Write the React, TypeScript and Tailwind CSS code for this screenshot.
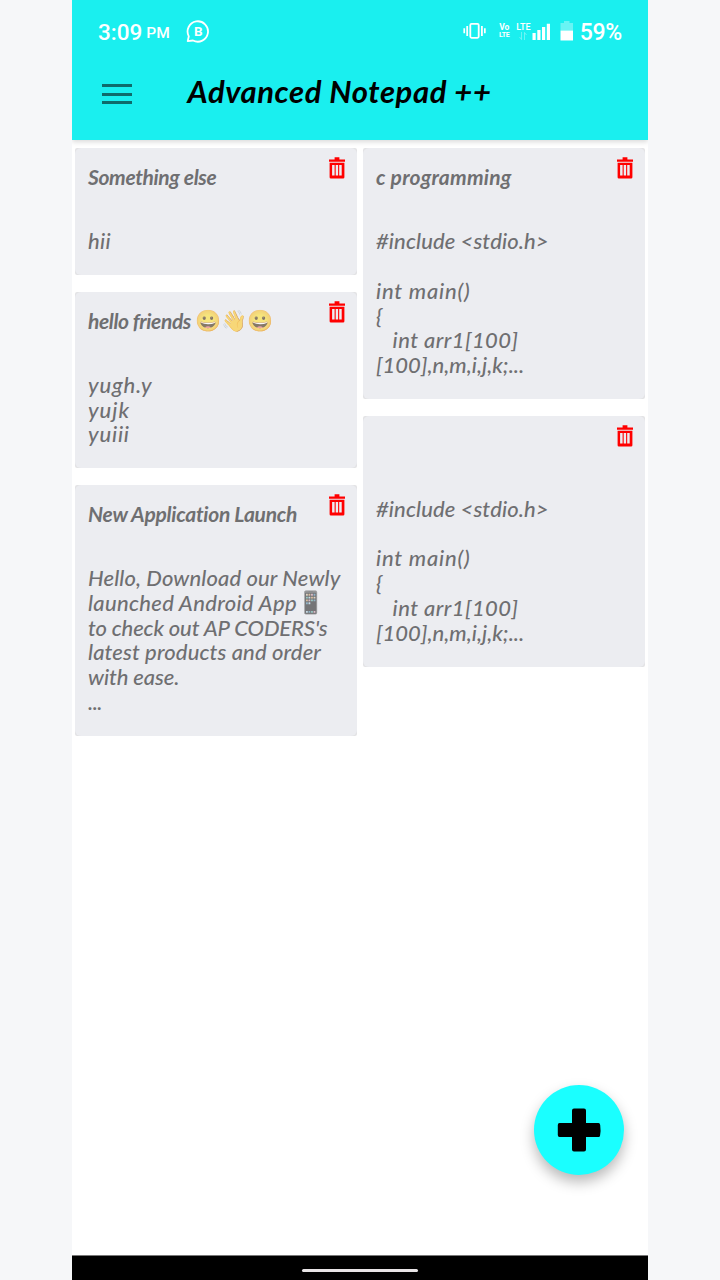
interface Line {
  text: string;
  tracking?: string;
  emoji?: string;
  emojiClass?: string;
}

interface Note {
  title: Line;
  body: Line[];
}

const stdioBody: Line[] = [
  { text: "#include <stdio.h>", tracking: "tracking-[0.1px]" },
  { text: "" },
  { text: "int main()", tracking: "tracking-[0.8px]" },
  { text: "{" },
  { text: "   int arr1[100]", tracking: "tracking-[0.45px]" },
  { text: "[100],n,m,i,j,k;...", tracking: "tracking-[0.05px]" },
];

const leftNotes: Note[] = [
  {
    title: { text: "Something else", tracking: "tracking-[-0.35px]" },
    body: [{ text: "hii", tracking: "tracking-[0.3px]" }],
  },
  {
    title: { text: "hello friends ", tracking: "tracking-[-0.4px]", emoji: "😀👋😀", emojiClass: "opacity-60" },
    body: [
      { text: "yugh.y", tracking: "tracking-[0.8px]" },
      { text: "yujk", tracking: "tracking-[1px]" },
      { text: "yuiii", tracking: "tracking-[0.8px]" },
    ],
  },
  {
    title: { text: "New Application Launch", tracking: "tracking-[-0.27px]" },
    body: [
      { text: "Hello, Download our Newly", tracking: "tracking-[0.12px]" },
      { text: "launched Android App", tracking: "tracking-[0.3px]", emoji: "📱", emojiClass: "opacity-50 grayscale-50" },
      { text: "to check out AP CODERS's", tracking: "tracking-[-0.13px]" },
      { text: "latest products and order", tracking: "tracking-[0.12px]" },
      { text: "with ease.", tracking: "tracking-[-0.1px]" },
      { text: "...", tracking: "tracking-[-0.5px]" },
    ],
  },
];

const rightNotes: Note[] = [
  { title: { text: "c programming", tracking: "tracking-[0.25px]" }, body: stdioBody },
  { title: { text: "" }, body: stdioBody },
];

function TextLine({ line }: { line: Line }) {
  return (
    <p className="flex h-[24.8px] items-center whitespace-pre leading-[24.8px]">
      <span className={line.tracking}>{line.text}</span>
      {line.emoji && (
        <span className={"font-['Noto_Color_Emoji',sans-serif] font-normal not-italic " + line.emojiClass}>{line.emoji}</span>
      )}
    </p>
  );
}

function TrashIcon() {
  return (
    <svg width="18" height="22" viewBox="0 0 18 22" fill="#ff0000">
      <path d="M6.6 0.3h4.8v2.2H17v2.2H1V2.5h5.6z" />
      <path
        fillRule="evenodd"
        d="M1.6 5.7h14.8v14.5a1.3 1.3 0 0 1-1.3 1.3H2.9a1.3 1.3 0 0 1-1.3-1.3zM4.1 8v10.6h2.5V8zM7.7 8v10.6h2.4V8zM11.2 8v10.6h2.5V8z"
      />
    </svg>
  );
}

function NoteCard({ note }: { note: Note }) {
  return (
    <div className="rounded-[2px] bg-[#e3e3e5]">
      <article className="relative rounded-[6px] bg-[#ecedf1] pt-[17px] pr-1 pb-[21px] pl-[13px] font-['Lato',sans-serif] text-[22px] text-[#6f6f71] italic">
        <h2 className="h-[25px] text-[21px] font-bold">
          <TextLine line={note.title} />
        </h2>
        <div className="mt-[39.2px] font-medium">
          {note.body.map((line, i) => (
            <TextLine key={i} line={line} />
          ))}
        </div>
        <button className="absolute top-[9px] right-[11px]" aria-label="Delete note">
          <TrashIcon />
        </button>
      </article>
    </div>
  );
}

function StatusBar() {
  return (
    <div className="flex h-[64px] items-center px-[26px] font-['Roboto',sans-serif] font-medium text-white">
      <span className="text-[22.5px] leading-none">3:09</span>
      <span className="mt-1 ml-[4px] text-[15.5px] leading-none">PM</span>
      <svg className="-mt-[3px] ml-[16px]" width="24" height="24" viewBox="0 0 24 24" fill="none" stroke="#fff" strokeWidth="1.8">
        <path d="M1.7 22.1 2.8 17.3A10.2 10.2 0 1 1 7 21.5z" strokeLinejoin="round" />
        <text x="12.2" y="16.8" textAnchor="middle" fill="#fff" stroke="none" fontFamily="Roboto" fontSize="13.5" fontWeight="700">B</text>
      </svg>
      <svg className="-mt-[2px] ml-auto" width="24" height="18" viewBox="0 0 24 18" fill="#fff">
        <rect x="7.3" y="1.8" width="8.4" height="14" rx="1.2" fill="none" stroke="#fff" strokeWidth="1.8" />
        <path d="M3.3 4h1.8v10H3.3zM0.4 6.3h1.7v5H0.4zM18 4h1.8v10H18zM21 6.3h1.7v5H21z" />
      </svg>
      <span className="-mt-[2px] ml-[12px] flex w-[11px] flex-col items-center font-bold">
        <span className="text-[8.5px] leading-[8px]">Vo</span>
        <span className="text-[7px] leading-[8px] tracking-[-0.3px]">LTE</span>
      </span>
      <span className="-mt-[2px] ml-[6px] flex w-[15px] flex-col items-center">
        <span className="text-[9px] leading-[9px]">LTE</span>
        <svg width="8" height="8" viewBox="0 0 8 8" fill="none" stroke="#fff" strokeOpacity="0.35">
          <path d="M2.5 0v7.5L0.5 5M5.5 8V0.5l2 2.5" />
        </svg>
      </span>
      <svg className="-mt-[2px] ml-px" width="19" height="17" viewBox="0 0 19 17" fill="#fff">
        <path d="M0.5 10h3.2v7H0.5zM5.3 7h3.2v10H5.3zM10 4h3.2v13H10zM14.8 0.8H18V17h-3.2z" />
      </svg>
      <svg className="-mt-[2px] ml-[9px]" width="14" height="20" viewBox="0 0 14 20" fill="#fff">
        <path d="M4 0h5.5v2H13v7.5H0.5V2H4z" fillOpacity="0.35" />
        <path d="M0.5 9.5H13v10H0.5z" />
      </svg>
      <span className="ml-[6px] text-[23px] leading-none tracking-[-0.3px]">59%</span>
    </div>
  );
}

function AppBar() {
  return (
    <div className="flex h-[76px] items-start pl-[30px]">
      <button className="mt-[20px] flex w-[30px] flex-col gap-[5.7px]" aria-label="Open menu">
        <span className="h-[3px] bg-[#0e6b6b]" />
        <span className="h-[3px] bg-[#0e6b6b]" />
        <span className="h-[3px] bg-[#0e6b6b]" />
      </button>
      <h1 className="ml-[55.5px] pt-[7px] font-['Lato',sans-serif] text-[31px] leading-10 font-bold tracking-[0.6px] whitespace-nowrap text-black italic">
        Advanced Notepad ++
      </h1>
    </div>
  );
}

export default function App() {
  return (
    <div className="flex h-[1280px] w-[720px] justify-center overflow-hidden bg-[#f6f7f9]">
      <div className="relative flex h-full w-[576px] flex-col overflow-hidden bg-white">
        <header className="h-[140px] shrink-0 bg-[#1aefef] shadow-[0_2px_5px_rgba(0,0,0,0.15)]">
          <StatusBar />
          <AppBar />
        </header>
        <main className="grid flex-1 grid-cols-2 items-start gap-x-[6px] px-[3px] pt-2">
          <div className="flex flex-col gap-[16.6px]">
            {leftNotes.map((note, i) => (
              <NoteCard key={i} note={note} />
            ))}
          </div>
          <div className="flex flex-col gap-[16.6px]">
            {rightNotes.map((note, i) => (
              <NoteCard key={i} note={note} />
            ))}
          </div>
        </main>
        <button
          className="absolute right-6 bottom-[105px] flex size-[90px] items-center justify-center rounded-full bg-[#1affff] shadow-[0_7px_14px_rgba(0,0,0,0.28)]"
          aria-label="Add note"
        >
          <svg width="44" height="44" viewBox="0 0 44 44">
            <path d="M17 0.5h10q2 0 2 2V15h12.5q1.5 0 1.7 2l.4 6-.6 5q-.2 1-1.5 1H29v12.5q0 2-2 2H17q-2 0-2-2V29H2.5Q.8 29 .8 27V17q0-2 1.7-2H15V2.5q0-2 2-2z" />
          </svg>
        </button>
        <footer className="flex h-[25px] shrink-0 items-center justify-center border-t border-[#777] bg-black pt-1">
          <div className="h-[3px] w-[116px] rounded-full bg-[#e8e4e6]" />
        </footer>
      </div>
    </div>
  );
}
